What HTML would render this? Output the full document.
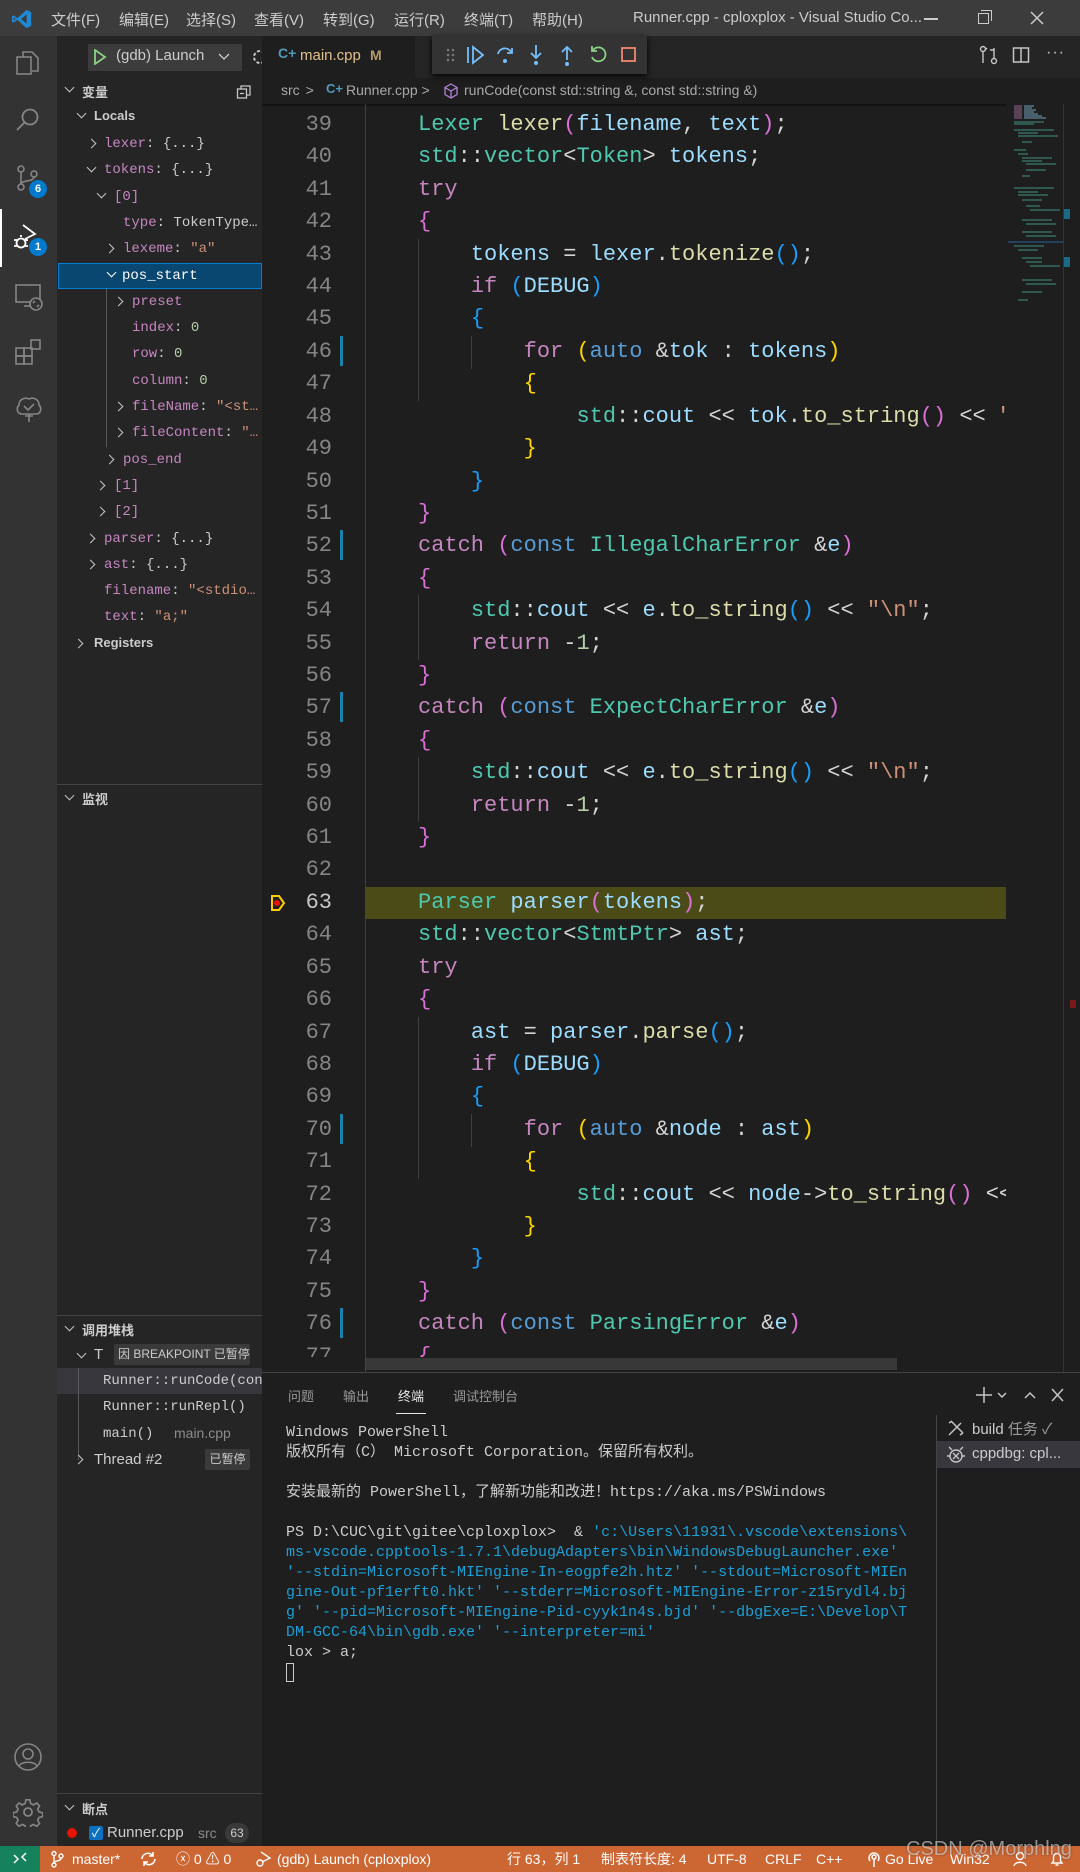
<!DOCTYPE html>
<html><head><meta charset="utf-8"><style>
*{margin:0;padding:0;box-sizing:border-box}
body{width:1080px;height:1872px;background:#1e1e1e;position:relative;overflow:hidden;font-family:"Liberation Sans","Noto Sans CJK SC",sans-serif;color:#ccc}
.a{position:absolute}
.ui{font-size:15px;white-space:nowrap}
.mono{font-family:"Liberation Mono","Noto Sans CJK SC",monospace}
.code{position:absolute;left:418px;font-family:"Liberation Mono",monospace;font-size:22px;white-space:pre;color:#d4d4d4;line-height:32px;height:32px}
.ln{position:absolute;width:60px;left:272px;text-align:right;font-family:"Liberation Mono",monospace;font-size:22px;color:#858585;line-height:32px}
.t{color:#4ec9b0}.v{color:#9cdcfe}.f{color:#dcdcaa}.k{color:#c586c0}.b{color:#569cd6}.s{color:#ce9178}.n{color:#b5cea8}
.g1{color:#ffd700}.g2{color:#da70d6}.g3{color:#179fff}
.var{position:absolute;font-family:"Liberation Mono",monospace;font-size:14px;white-space:nowrap;line-height:26px;height:26px}
.vn{color:#c586c0}.vv{color:#ccc}.vs{color:#ce9178}.vnum{color:#b5cea8}
.chev{position:absolute;width:8px;height:8px;border-right:1.5px solid #c5c5c5;border-bottom:1.5px solid #c5c5c5}
.cr{transform:rotate(-45deg)}.cd{transform:rotate(45deg)}
.term{position:absolute;left:286px;font-family:"Liberation Mono","Noto Sans CJK SC",monospace;font-size:15px;line-height:20px;white-space:pre;color:#ccc}
.tb{color:#1a9fd6}
.sb{position:absolute;top:1846px;height:26px;line-height:26px;color:#fff;font-size:14px;white-space:nowrap}
</style></head><body>

<!-- title bar -->
<div class="a" style="left:0;top:0;width:1080px;height:36px;background:#3c3c3c"></div>
<svg class="a" style="left:11px;top:8px" width="22" height="22" viewBox="0 0 24 24"><path d="M17 2 L22 4.5 V19.5 L17 22 L7 13 L3 16 L1 15 V9 L3 8 L7 11 Z M17 7 L11 12 L17 17 Z M3 10 V14 L5 12 Z" fill="#1e8ad6"/></svg>
<div class="a ui" style="top:9px;left:51px;color:#ccc;font-size:15px">文件(F)</div>
<div class="a ui" style="top:9px;left:119px;color:#ccc">编辑(E)</div>
<div class="a ui" style="top:9px;left:186px;color:#ccc">选择(S)</div>
<div class="a ui" style="top:9px;left:254px;color:#ccc">查看(V)</div>
<div class="a ui" style="top:9px;left:323px;color:#ccc">转到(G)</div>
<div class="a ui" style="top:9px;left:394px;color:#ccc">运行(R)</div>
<div class="a ui" style="top:9px;left:464px;color:#ccc">终端(T)</div>
<div class="a ui" style="top:9px;left:532px;color:#ccc">帮助(H)</div>
<div class="a ui" style="top:9px;left:633px;color:#ccc">Runner.cpp - cploxplox - Visual Studio Co...</div>
<div class="a" style="left:924px;top:18px;width:14px;height:1.5px;background:#ccc"></div>
<div class="a" style="left:978px;top:13px;width:11px;height:11px;border:1.5px solid #ccc"></div>
<div class="a" style="left:981px;top:10px;width:11px;height:11px;border-top:1.5px solid #ccc;border-right:1.5px solid #ccc"></div>
<svg class="a" style="left:1030px;top:11px" width="14" height="14"><path d="M1 1L13 13M13 1L1 13" stroke="#ccc" stroke-width="1.5"/></svg>

<!-- activity bar -->
<div class="a" style="left:0;top:36px;width:57px;height:1810px;background:#333"></div>
<div class="a" style="left:0;top:209px;width:2px;height:58px;background:#fff"></div>
<svg class="a" style="left:14px;top:49px" width="28" height="28" viewBox="0 0 28 28" fill="none" stroke="#858585" stroke-width="1.6"><path d="M9 8V3h9l6 6v13h-6"/><rect x="3" y="8" width="14" height="17"/></svg>
<svg class="a" style="left:14px;top:106px" width="28" height="28" viewBox="0 0 28 28" fill="none" stroke="#858585" stroke-width="1.8"><circle cx="16" cy="11" r="7.5"/><path d="M10.5 16.5L3 24"/></svg>
<svg class="a" style="left:14px;top:164px" width="28" height="28" viewBox="0 0 28 28" fill="none" stroke="#858585" stroke-width="1.6"><circle cx="7" cy="5" r="3"/><circle cx="7" cy="23" r="3"/><circle cx="20" cy="10" r="3"/><path d="M7 8v12M20 13c0 5-13 3-13 7"/></svg>
<div class="a" style="left:29px;top:180px;width:18px;height:18px;border-radius:9px;background:#007acc;color:#fff;font-size:11px;text-align:center;line-height:18px;font-weight:bold">6</div>
<svg class="a" style="left:12px;top:222px" width="32" height="32" viewBox="0 0 32 32" fill="none" stroke="#fff" stroke-width="1.8"><path d="M11 3L23 12L13 17"/><circle cx="9" cy="21" r="4.5"/><path d="M2 18h3M2 24h3M13 18h3M13 24h3M9 15v-2"/></svg>
<div class="a" style="left:29px;top:238px;width:18px;height:18px;border-radius:9px;background:#007acc;color:#fff;font-size:11px;text-align:center;line-height:18px;font-weight:bold">1</div>
<svg class="a" style="left:14px;top:282px" width="30" height="30" viewBox="0 0 30 30" fill="none" stroke="#858585" stroke-width="1.6"><rect x="2" y="3" width="24" height="17"/><path d="M10 24h8"/><circle cx="22" cy="22" r="6" fill="#333"/><path d="M19 21l2-2M23 25l2-2"/></svg>
<svg class="a" style="left:14px;top:338px" width="30" height="30" viewBox="0 0 30 30" fill="none" stroke="#858585" stroke-width="1.6"><rect x="2" y="10" width="8" height="8"/><rect x="10" y="10" width="8" height="8"/><rect x="2" y="18" width="8" height="8"/><rect x="10" y="18" width="8" height="8"/><rect x="17" y="2" width="9" height="9"/></svg>
<svg class="a" style="left:14px;top:394px" width="30" height="30" viewBox="0 0 30 30" fill="none" stroke="#858585" stroke-width="1.6"><path d="M15 28v-8M11 22h8M8 20C3 20 2 14 5 11C5 5 11 3 15 5C19 3 25 5 25 11C28 14 27 20 22 20Z"/><path d="M10 12l4 4l6-6"/></svg>
<svg class="a" style="left:13px;top:1742px" width="30" height="30" viewBox="0 0 30 30" fill="none" stroke="#858585" stroke-width="1.6"><circle cx="15" cy="15" r="13"/><circle cx="15" cy="12" r="5"/><path d="M6 24c3-5 15-5 18 0"/></svg>
<svg class="a" style="left:13px;top:1797px" width="30" height="30" viewBox="0 0 30 30" fill="none" stroke="#858585" stroke-width="1.8"><circle cx="15" cy="15" r="4"/><path d="M13 2h4l1 4 3 1.5 3.5-2 3 3-2 3.5 1.5 3 4 1v4l-4 1-1.5 3 2 3.5-3 3-3.5-2-3 1.5-1 4h-4l-1-4-3-1.5-3.5 2-3-3 2-3.5-1.5-3-4-1v-4l4-1 1.5-3-2-3.5 3-3 3.5 2 3-1.5z" transform="scale(0.93) translate(1 1)"/></svg>

<!-- sidebar -->
<div class="a" style="left:57px;top:36px;width:205px;height:1810px;background:#252526"></div>
<div class="a" style="left:88px;top:44px;width:154px;height:27px;background:#3c3c3c"></div>
<svg class="a" style="left:93px;top:49px" width="14" height="16"><path d="M2 1L12 8L2 15Z" fill="none" stroke="#89d185" stroke-width="1.8"/></svg>
<div class="a ui" style="left:116px;top:47px;color:#ccc">(gdb) Launch</div>
<svg class="a" style="left:218px;top:52px" width="12" height="10"><path d="M1 2L6 7L11 2" fill="none" stroke="#ccc" stroke-width="1.3"/></svg>
<svg class="a" style="left:250px;top:47px" width="14" height="20"><circle cx="10" cy="10" r="6" fill="none" stroke="#c5c5c5" stroke-width="2" stroke-dasharray="3 2"/></svg>

<div class="chev cd" style="left:66px;top:84px;width:7px;height:7px"></div>
<div class="a ui" style="left:82px;top:82px;font-size:13px;font-weight:bold;color:#ccc">变量</div>
<svg class="a" style="left:236px;top:84px" width="16" height="16" fill="none" stroke="#c5c5c5" stroke-width="1.3"><rect x="1.5" y="5" width="9" height="9"/><path d="M5 5V2h9v9h-3.5M4 9.5h4"/></svg>

<div class="chev cd" style="left:78px;top:110px;width:7px;height:7px"></div>
<div class="a ui" style="left:94px;top:108px;font-size:13px;font-weight:bold;color:#ccc">Locals</div>

<div class="chev cr" style="left:88px;top:140px;width:7px;height:7px"></div>
<div class="var" style="left:104px;top:131px"><span class="vn">lexer</span><span class="vv">: {...}</span></div>
<div class="chev cd" style="left:88px;top:164px;width:7px;height:7px"></div>
<div class="var" style="left:104px;top:157px"><span class="vn">tokens</span><span class="vv">: {...}</span></div>
<div class="chev cd" style="left:98px;top:190px;width:7px;height:7px"></div>
<div class="var" style="left:114px;top:184px"><span class="vn">[0]</span></div>
<div class="var" style="left:123px;top:210px"><span class="vn">type</span><span class="vv">: TokenType…</span></div>
<div class="chev cr" style="left:106px;top:245px;width:7px;height:7px"></div>
<div class="var" style="left:123px;top:236px"><span class="vn">lexeme</span><span class="vv">: </span><span class="vs">"a"</span></div>
<div class="a" style="left:58px;top:263px;width:204px;height:26px;background:#094771;border:1px solid #007fd4"></div>
<div class="chev cd" style="left:108px;top:269px;width:7px;height:7px;border-color:#fff"></div>
<div class="var" style="left:122px;top:263px;color:#fff">pos_start</div>
<div class="a" style="left:106px;top:289px;width:1px;height:158px;background:#585858"></div>
<div class="chev cr" style="left:115px;top:298px;width:7px;height:7px"></div>
<div class="var" style="left:132px;top:289px"><span class="vn">preset</span></div>
<div class="var" style="left:132px;top:315px"><span class="vn">index</span><span class="vv">: </span><span class="vnum">0</span></div>
<div class="var" style="left:132px;top:341px"><span class="vn">row</span><span class="vv">: </span><span class="vnum">0</span></div>
<div class="var" style="left:132px;top:368px"><span class="vn">column</span><span class="vv">: </span><span class="vnum">0</span></div>
<div class="chev cr" style="left:115px;top:403px;width:7px;height:7px"></div>
<div class="var" style="left:132px;top:394px"><span class="vn">fileName</span><span class="vv">: </span><span class="vs">"&lt;st…</span></div>
<div class="chev cr" style="left:115px;top:429px;width:7px;height:7px"></div>
<div class="var" style="left:132px;top:420px"><span class="vn">fileContent</span><span class="vv">: </span><span class="vs">"…</span></div>
<div class="chev cr" style="left:106px;top:456px;width:7px;height:7px"></div>
<div class="var" style="left:123px;top:447px"><span class="vn">pos_end</span></div>
<div class="chev cr" style="left:97px;top:482px;width:7px;height:7px"></div>
<div class="var" style="left:114px;top:473px"><span class="vn">[1]</span></div>
<div class="chev cr" style="left:97px;top:508px;width:7px;height:7px"></div>
<div class="var" style="left:114px;top:499px"><span class="vn">[2]</span></div>
<div class="chev cr" style="left:87px;top:535px;width:7px;height:7px"></div>
<div class="var" style="left:104px;top:526px"><span class="vn">parser</span><span class="vv">: {...}</span></div>
<div class="chev cr" style="left:87px;top:561px;width:7px;height:7px"></div>
<div class="var" style="left:104px;top:552px"><span class="vn">ast</span><span class="vv">: {...}</span></div>
<div class="var" style="left:104px;top:578px"><span class="vn">filename</span><span class="vv">: </span><span class="vs">"&lt;stdio…</span></div>
<div class="var" style="left:104px;top:604px"><span class="vn">text</span><span class="vv">: </span><span class="vs">"a;"</span></div>
<div class="chev cr" style="left:75px;top:640px;width:7px;height:7px"></div>
<div class="a ui" style="left:94px;top:635px;font-size:13px;font-weight:bold;color:#ccc">Registers</div>

<div class="a" style="left:57px;top:784px;width:205px;height:1px;background:#444"></div>
<div class="chev cd" style="left:66px;top:792px;width:7px;height:7px"></div>
<div class="a ui" style="left:82px;top:789px;font-size:13px;font-weight:bold;color:#ccc">监视</div>

<div class="a" style="left:57px;top:1315px;width:205px;height:1px;background:#444"></div>
<div class="chev cd" style="left:66px;top:1323px;width:7px;height:7px"></div>
<div class="a ui" style="left:82px;top:1320px;font-size:13px;font-weight:bold;color:#ccc">调用堆栈</div>
<div class="chev cd" style="left:78px;top:1350px;width:7px;height:7px"></div>
<div class="a ui" style="left:94px;top:1346px;color:#ccc">T</div>
<div class="a" style="left:114px;top:1344px;width:136px;height:21px;background:#3a3a3a;border-radius:2px;color:#ccc;font-size:12px;line-height:21px;padding-left:4px;white-space:nowrap">因 BREAKPOINT 已暂停</div>
<div class="a" style="left:57px;top:1368px;width:205px;height:26px;background:#37373d"></div>
<div class="a" style="left:78px;top:1368px;width:1px;height:92px;background:#585858"></div>
<div class="var" style="left:103px;top:1368px;color:#ccc;width:159px;overflow:hidden">Runner::runCode(con</div>
<div class="var" style="left:103px;top:1394px;color:#ccc">Runner::runRepl()</div>
<div class="var" style="left:103px;top:1421px;color:#ccc">main()</div>
<div class="a ui" style="left:174px;top:1425px;font-size:14px;color:#8b8b8b">main.cpp</div>
<div class="chev cr" style="left:75px;top:1456px;width:7px;height:7px"></div>
<div class="a ui" style="left:94px;top:1451px;color:#ccc">Thread #2</div>
<div class="a" style="left:205px;top:1449px;width:45px;height:21px;background:#3a3a3a;border-radius:2px;color:#ccc;font-size:12px;line-height:21px;text-align:center">已暂停</div>

<div class="a" style="left:57px;top:1793px;width:205px;height:1px;background:#444"></div>
<div class="chev cd" style="left:66px;top:1802px;width:7px;height:7px"></div>
<div class="a ui" style="left:82px;top:1799px;font-size:13px;font-weight:bold;color:#ccc">断点</div>
<div class="a" style="left:67px;top:1828px;width:10px;height:10px;border-radius:5px;background:#e51400"></div>
<div class="a" style="left:89px;top:1826px;width:14px;height:14px;border-radius:2px;background:#0e70c0;color:#fff;font-size:12px;line-height:14px;text-align:center">✓</div>
<div class="a ui" style="left:107px;top:1824px;color:#ccc">Runner.cpp</div>
<div class="a ui" style="left:198px;top:1825px;font-size:14px;color:#8b8b8b">src</div>
<div class="a" style="left:225px;top:1823px;width:24px;height:20px;border-radius:10px;background:#3a3a3a;font-size:12px;color:#ccc;line-height:20px;text-align:center">63</div>

<!-- editor tab bar -->
<div class="a" style="left:262px;top:36px;width:818px;height:42px;background:#252526"></div>
<div class="a" style="left:262px;top:36px;width:153px;height:42px;background:#1e1e1e"></div>
<div class="a ui" style="left:278px;top:45px;color:#519aba;font-weight:bold;font-size:14px">C+</div>
<div class="a ui" style="left:300px;top:47px;color:#e2c08d">main.cpp</div>
<div class="a ui" style="left:370px;top:47px;color:#b59b6e;font-weight:bold;font-size:14px">M</div>
<div class="a" style="left:432px;top:36px;width:215px;height:38px;background:#333;box-shadow:0 2px 6px #000"></div>
<svg class="a" style="left:440px;top:40px" width="205" height="30" fill="none" stroke-width="1.8">
 <g fill="#777"><circle cx="8" cy="10" r="1.3"/><circle cx="13" cy="10" r="1.3"/><circle cx="8" cy="15" r="1.3"/><circle cx="13" cy="15" r="1.3"/><circle cx="8" cy="20" r="1.3"/><circle cx="13" cy="20" r="1.3"/></g>
 <path d="M28 7v16M33 7l10 8l-10 8z" stroke="#75beff"/>
 <path d="M58 14a7 7 0 0 1 13-2M72 8v5h-5" stroke="#75beff"/><circle cx="65" cy="21" r="2" fill="#75beff" stroke="none"/>
 <path d="M96 5v13M91 13l5 5l5-5" stroke="#75beff"/><circle cx="96" cy="23" r="2" fill="#75beff" stroke="none"/>
 <path d="M127 20V7M122 12l5-5l5 5" stroke="#75beff"/><circle cx="127" cy="24" r="2" fill="#75beff" stroke="none"/>
 <path d="M153 10a7 7 0 1 1-1 7M152 6v5h5" stroke="#89d185"/>
 <rect x="182" y="8" width="13" height="13" stroke="#f48771"/>
</svg>
<svg class="a" style="left:979px;top:45px" width="20" height="20" fill="none" stroke="#c5c5c5" stroke-width="1.4"><circle cx="4" cy="4" r="2.5"/><circle cx="15" cy="16" r="2.5"/><path d="M4 7v11M15 13V3M11 5h4M8 3l-2 2"/></svg>
<svg class="a" style="left:1012px;top:46px" width="18" height="18" fill="none" stroke="#c5c5c5" stroke-width="1.5"><rect x="1.5" y="2" width="15" height="14"/><path d="M9 2v14"/></svg>
<div class="a ui" style="left:1046px;top:44px;color:#c5c5c5;font-size:16px;letter-spacing:1px">···</div>

<!-- breadcrumb -->
<div class="a ui" style="left:281px;top:82px;font-size:14px;color:#a9a9a9">src <span style="margin-left:2px">&gt;</span></div>
<div class="a ui" style="left:326px;top:81px;font-size:13px;color:#519aba;font-weight:bold">C+</div>
<div class="a ui" style="left:346px;top:82px;font-size:14px;color:#a9a9a9">Runner.cpp &gt;</div>
<svg class="a" style="left:443px;top:83px" width="16" height="16" fill="none" stroke="#b180d7" stroke-width="1.3"><path d="M8 1l6 3.5v7L8 15l-6-3.5v-7z M2 4.5L8 8l6-3.5M8 8v7"/></svg>
<div class="a ui" style="left:464px;top:82px;font-size:14px;color:#a9a9a9">runCode(const std::string &amp;, const std::string &amp;)</div>
<div class="a" style="left:262px;top:104px;width:744px;height:3px;background:linear-gradient(#0008,#0000)"></div>

<!-- editor body -->
<div class="a" style="left:365px;top:104px;width:1px;height:1268px;background:#404040"></div>
<div class="a" style="left:365px;top:887px;width:641px;height:32px;background:#4b4b18"></div>
<!-- indent guides -->
<div class="a" style="left:418px;top:239px;width:1px;height:162px;background:#404040"></div>
<div class="a" style="left:471px;top:336px;width:1px;height:33px;background:#404040"></div>
<div class="a" style="left:418px;top:595px;width:1px;height:65px;background:#404040"></div>
<div class="a" style="left:418px;top:757px;width:1px;height:65px;background:#404040"></div>
<div class="a" style="left:418px;top:1017px;width:1px;height:162px;background:#404040"></div>
<div class="a" style="left:471px;top:1114px;width:1px;height:33px;background:#404040"></div>
<!-- modified gutter markers -->
<div class="a" style="left:340px;top:336px;width:3px;height:30px;background:#1b81a8"></div>
<div class="a" style="left:340px;top:530px;width:3px;height:30px;background:#1b81a8"></div>
<div class="a" style="left:340px;top:692px;width:3px;height:30px;background:#1b81a8"></div>
<div class="a" style="left:340px;top:1114px;width:3px;height:30px;background:#1b81a8"></div>
<div class="a" style="left:340px;top:1308px;width:3px;height:30px;background:#1b81a8"></div>
<svg class="a" style="left:270px;top:894px" width="16" height="18"><path d="M2 2h7l5 7l-5 7H2z" fill="none" stroke="#ffcc00" stroke-width="2"/><circle cx="7" cy="9" r="3" fill="#e51400"/></svg>

<div class="a" style="left:262px;top:104px;width:744px;height:1253px;overflow:hidden">
<div style="position:relative;left:-262px;top:-104px">
<div class="ln" style="top:109px">39</div><div class="code" style="top:109px"><span class="t">Lexer</span> <span class="f">lexer</span><span class="g2">(</span><span class="v">filename</span>, <span class="v">text</span><span class="g2">)</span>;</div>
<div class="ln" style="top:141px">40</div><div class="code" style="top:141px"><span class="t">std</span>::<span class="t">vector</span>&lt;<span class="t">Token</span>&gt; <span class="v">tokens</span>;</div>
<div class="ln" style="top:174px">41</div><div class="code" style="top:174px"><span class="k">try</span></div>
<div class="ln" style="top:206px">42</div><div class="code" style="top:206px"><span class="g2">{</span></div>
<div class="ln" style="top:239px">43</div><div class="code" style="top:239px">    <span class="v">tokens</span> = <span class="v">lexer</span>.<span class="f">tokenize</span><span class="g3">()</span>;</div>
<div class="ln" style="top:271px">44</div><div class="code" style="top:271px">    <span class="k">if</span> <span class="g3">(</span><span class="v">DEBUG</span><span class="g3">)</span></div>
<div class="ln" style="top:303px">45</div><div class="code" style="top:303px">    <span class="g3">{</span></div>
<div class="ln" style="top:336px">46</div><div class="code" style="top:336px">        <span class="k">for</span> <span class="g1">(</span><span class="b">auto</span> &amp;<span class="v">tok</span> : <span class="v">tokens</span><span class="g1">)</span></div>
<div class="ln" style="top:368px">47</div><div class="code" style="top:368px">        <span class="g1">{</span></div>
<div class="ln" style="top:401px">48</div><div class="code" style="top:401px">            <span class="t">std</span>::<span class="v">cout</span> &lt;&lt; <span class="v">tok</span>.<span class="f">to_string</span><span class="g2">()</span> &lt;&lt; <span class="s">"\n"</span>;</div>
<div class="ln" style="top:433px">49</div><div class="code" style="top:433px">        <span class="g1">}</span></div>
<div class="ln" style="top:466px">50</div><div class="code" style="top:466px">    <span class="g3">}</span></div>
<div class="ln" style="top:498px">51</div><div class="code" style="top:498px"><span class="g2">}</span></div>
<div class="ln" style="top:530px">52</div><div class="code" style="top:530px"><span class="k">catch</span> <span class="g2">(</span><span class="b">const</span> <span class="t">IllegalCharError</span> &amp;<span class="v">e</span><span class="g2">)</span></div>
<div class="ln" style="top:563px">53</div><div class="code" style="top:563px"><span class="g2">{</span></div>
<div class="ln" style="top:595px">54</div><div class="code" style="top:595px">    <span class="t">std</span>::<span class="v">cout</span> &lt;&lt; <span class="v">e</span>.<span class="f">to_string</span><span class="g3">()</span> &lt;&lt; <span class="s">"\n"</span>;</div>
<div class="ln" style="top:628px">55</div><div class="code" style="top:628px">    <span class="k">return</span> -<span class="n">1</span>;</div>
<div class="ln" style="top:660px">56</div><div class="code" style="top:660px"><span class="g2">}</span></div>
<div class="ln" style="top:692px">57</div><div class="code" style="top:692px"><span class="k">catch</span> <span class="g2">(</span><span class="b">const</span> <span class="t">ExpectCharError</span> &amp;<span class="v">e</span><span class="g2">)</span></div>
<div class="ln" style="top:725px">58</div><div class="code" style="top:725px"><span class="g2">{</span></div>
<div class="ln" style="top:757px">59</div><div class="code" style="top:757px">    <span class="t">std</span>::<span class="v">cout</span> &lt;&lt; <span class="v">e</span>.<span class="f">to_string</span><span class="g3">()</span> &lt;&lt; <span class="s">"\n"</span>;</div>
<div class="ln" style="top:790px">60</div><div class="code" style="top:790px">    <span class="k">return</span> -<span class="n">1</span>;</div>
<div class="ln" style="top:822px">61</div><div class="code" style="top:822px"><span class="g2">}</span></div>
<div class="ln" style="top:854px">62</div>
<div class="ln" style="top:887px;color:#c6c6c6">63</div><div class="code" style="top:887px"><span class="t">Parser</span> <span class="f" style="color:#9cdcfe">parser</span><span class="g2">(</span><span class="v">tokens</span><span class="g2">)</span>;</div>
<div class="ln" style="top:919px">64</div><div class="code" style="top:919px"><span class="t">std</span>::<span class="t">vector</span>&lt;<span class="t">StmtPtr</span>&gt; <span class="v">ast</span>;</div>
<div class="ln" style="top:952px">65</div><div class="code" style="top:952px"><span class="k">try</span></div>
<div class="ln" style="top:984px">66</div><div class="code" style="top:984px"><span class="g2">{</span></div>
<div class="ln" style="top:1017px">67</div><div class="code" style="top:1017px">    <span class="v">ast</span> = <span class="v">parser</span>.<span class="f">parse</span><span class="g3">()</span>;</div>
<div class="ln" style="top:1049px">68</div><div class="code" style="top:1049px">    <span class="k">if</span> <span class="g3">(</span><span class="v">DEBUG</span><span class="g3">)</span></div>
<div class="ln" style="top:1081px">69</div><div class="code" style="top:1081px">    <span class="g3">{</span></div>
<div class="ln" style="top:1114px">70</div><div class="code" style="top:1114px">        <span class="k">for</span> <span class="g1">(</span><span class="b">auto</span> &amp;<span class="v">node</span> : <span class="v">ast</span><span class="g1">)</span></div>
<div class="ln" style="top:1146px">71</div><div class="code" style="top:1146px">        <span class="g1">{</span></div>
<div class="ln" style="top:1179px">72</div><div class="code" style="top:1179px">            <span class="t">std</span>::<span class="v">cout</span> &lt;&lt; <span class="v">node</span>-&gt;<span class="f">to_string</span><span class="g2">()</span> &lt;&lt; <span class="s">"\n"</span>;</div>
<div class="ln" style="top:1211px">73</div><div class="code" style="top:1211px">        <span class="g1">}</span></div>
<div class="ln" style="top:1243px">74</div><div class="code" style="top:1243px">    <span class="g3">}</span></div>
<div class="ln" style="top:1276px">75</div><div class="code" style="top:1276px"><span class="g2">}</span></div>
<div class="ln" style="top:1308px">76</div><div class="code" style="top:1308px"><span class="k">catch</span> <span class="g2">(</span><span class="b">const</span> <span class="t">ParsingError</span> &amp;<span class="v">e</span><span class="g2">)</span></div>
<div class="ln" style="top:1341px">77</div><div class="code" style="top:1341px"><span class="g2">{</span></div>
</div></div>
<!-- horizontal scrollbar -->
<div class="a" style="left:365px;top:1358px;width:532px;height:12px;background:#4a4a4a99"></div>

<!-- minimap -->
<div class="a" style="left:1006px;top:104px;width:57px;height:1268px;background:#1e1e1e"></div>
<svg class="a" style="left:1008px;top:104px" width="56" height="200">
<g opacity="0.55" stroke-width="1.2">
<path d="M6 2h8M6 4h8M6 6h8M6 8h8M6 10h8M6 12h8M6 14h8" stroke="#c586c0"/>
<path d="M16 2h10M16 4h8M16 6h12M16 8h10M16 10h14M16 12h18M16 14h22" stroke="#9cdcfe"/>
<path d="M6 18h30M6 20h20M6 26h40M10 29h20M10 32h40M14 38h10M6 46h12M10 50h10M14 54h30M14 57h20M18 60h30M18 66h20M14 72h8M6 84h40M10 88h20M10 91h30M14 96h20M18 102h14M22 106h30M14 116h30M18 120h30M14 128h30M18 132h30M6 142h30M10 146h20M14 154h20M18 158h16M22 162h30M14 176h30M18 180h30M14 188h20M10 196h10" stroke="#4ec9b0"/>
</g>
<path d="M0 138h56" stroke="#264f78" stroke-width="2" opacity="0.7"/>
</svg>
<div class="a" style="left:1063px;top:104px;width:1px;height:1268px;background:#333"></div>
<div class="a" style="left:1064px;top:209px;width:6px;height:10px;background:#1b6a85"></div>
<div class="a" style="left:1064px;top:257px;width:6px;height:10px;background:#1b6a85"></div>
<div class="a" style="left:1070px;top:1000px;width:6px;height:8px;background:#7a1a1a"></div>

<!-- panel -->
<div class="a" style="left:262px;top:1372px;width:818px;height:474px;background:#1e1e1e;border-top:1px solid #444"></div>
<div class="a ui" style="left:288px;top:1386px;font-size:13px;color:#999">问题</div>
<div class="a ui" style="left:343px;top:1386px;font-size:13px;color:#999">输出</div>
<div class="a ui" style="left:398px;top:1386px;font-size:13px;color:#e7e7e7">终端</div>
<div class="a" style="left:396px;top:1413px;width:30px;height:1px;background:#e7e7e7"></div>
<div class="a ui" style="left:453px;top:1386px;font-size:13px;color:#999">调试控制台</div>
<svg class="a" style="left:974px;top:1384px" width="100" height="22" fill="none" stroke="#c5c5c5" stroke-width="1.5"><path d="M10 3v16M2 11h16M24 9l4 4l4-4M51 14l5-5l5 5M78 5l11 12M89 5L78 17"/></svg>
<div class="term" style="top:1423px">Windows PowerShell
版权所有（C） Microsoft Corporation。保留所有权利。

安装最新的 PowerShell，了解新功能和改进！https://aka.ms/PSWindows

PS D:\CUC\git\gitee\cploxplox>  &amp; <span class="tb">'c:\Users\11931\.vscode\extensions\</span>
<span class="tb">ms-vscode.cpptools-1.7.1\debugAdapters\bin\WindowsDebugLauncher.exe'</span>
<span class="tb">'--stdin=Microsoft-MIEngine-In-eogpfe2h.htz' '--stdout=Microsoft-MIEn</span>
<span class="tb">gine-Out-pf1erft0.hkt' '--stderr=Microsoft-MIEngine-Error-z15rydl4.bj</span>
<span class="tb">g' '--pid=Microsoft-MIEngine-Pid-cyyk1n4s.bjd' '--dbgExe=E:\Develop\T</span>
<span class="tb">DM-GCC-64\bin\gdb.exe' '--interpreter=mi'</span>
lox &gt; a;</div>
<div class="a" style="left:286px;top:1663px;width:8px;height:19px;border:1px solid #ccc"></div>
<div class="a" style="left:936px;top:1415px;width:1px;height:431px;background:#444"></div>
<svg class="a" style="left:946px;top:1418px" width="20" height="20" fill="none" stroke="#c5c5c5" stroke-width="1.5"><path d="M3 17L15 5M5 3l12 12M3 5l3-2M14 17l3-2"/></svg>
<div class="a ui" style="left:972px;top:1418px;font-size:15px;color:#ccc">build <span style="color:#999">任务</span> <span style="color:#999">✓</span></div>
<div class="a" style="left:937px;top:1441px;width:143px;height:27px;background:#37373d"></div>
<svg class="a" style="left:946px;top:1444px" width="20" height="22" fill="none" stroke="#c5c5c5" stroke-width="1.4"><circle cx="10" cy="12" r="6"/><path d="M6 6l-3-3M14 6l3-3M1 12h3M16 12h3M7 9l6 6M13 9l-6 6"/></svg>
<div class="a ui" style="left:972px;top:1445px;font-size:15px;color:#ccc">cppdbg: cpl...</div>

<!-- status bar -->
<div class="a" style="left:0;top:1846px;width:1080px;height:26px;background:#cc6633"></div>
<div class="a" style="left:0;top:1846px;width:40px;height:26px;background:#16825d"></div>
<svg class="a" style="left:12px;top:1851px" width="16" height="14" fill="none" stroke="#fff" stroke-width="1.5"><path d="M2 4l4 4l-4 4M14 2l-4 4l4 4"/></svg>
<svg class="a" style="left:50px;top:1850px" width="14" height="18" fill="none" stroke="#fff" stroke-width="1.4"><circle cx="4" cy="3.5" r="2"/><circle cx="4" cy="15" r="2"/><circle cx="11" cy="6" r="2"/><path d="M4 5.5v7.5M11 8c0 4-7 2-7 5"/></svg>
<div class="sb" style="left:72px">master*</div>
<svg class="a" style="left:140px;top:1851px" width="17" height="16" fill="none" stroke="#fff" stroke-width="1.6"><path d="M2 8a6 6 0 0 1 11-3M15 8a6 6 0 0 1-11 3M13 1v4h-4M4 15v-4h4"/></svg>
<div class="sb" style="left:176px">ⓧ 0 ⚠ 0</div>
<svg class="a" style="left:254px;top:1850px" width="18" height="18" fill="none" stroke="#fff" stroke-width="1.4"><path d="M7 2l9 6l-8 4"/><circle cx="6" cy="13" r="3"/></svg>
<div class="sb" style="left:277px">(gdb) Launch (cploxplox)</div>
<div class="sb" style="left:507px">行 63，列 1</div>
<div class="sb" style="left:601px">制表符长度: 4</div>
<div class="sb" style="left:707px">UTF-8</div>
<div class="sb" style="left:765px">CRLF</div>
<div class="sb" style="left:816px">C++</div>
<svg class="a" style="left:866px;top:1850px" width="16" height="18" fill="none" stroke="#fff" stroke-width="1.5"><circle cx="8" cy="7" r="2"/><path d="M4 11a5 5 0 1 1 8 0M8 9v8"/></svg>
<div class="sb" style="left:885px">Go Live</div>
<div class="sb" style="left:950px">Win32</div>
<svg class="a" style="left:1012px;top:1851px" width="16" height="16" fill="none" stroke="#fff" stroke-width="1.4"><circle cx="8" cy="5" r="3.5"/><path d="M2 15c1-5 11-5 12 0"/></svg>
<svg class="a" style="left:1049px;top:1850px" width="16" height="18" fill="none" stroke="#fff" stroke-width="1.4"><path d="M3 13h10l-1.5-2V7a3.5 3.5 0 0 0-7 0v4z M6.5 15h3"/></svg>
<div class="a" style="left:906px;top:1838px;font-size:20px;color:rgba(230,230,230,0.6);white-space:nowrap;text-shadow:0 0 2px #0006">CSDN @Morphlng</div>
</body></html>
